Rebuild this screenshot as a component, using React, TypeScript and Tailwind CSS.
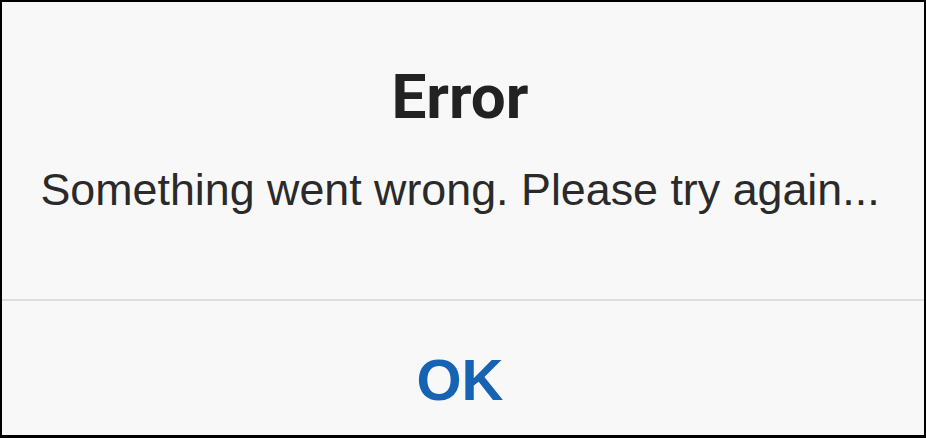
import React from 'react';

const ErrorDialog: React.FC = () => {
  return (
    <div className="w-[926px] h-[438px] bg-[#f8f8f8] border-black border-t-2 border-l-2 border-r-2 border-b-[3px] flex flex-col">
      <div className="h-[297px] flex flex-col items-center pt-[64px] pr-[6px]">
        <h1
          className="text-[62px] leading-none font-bold text-[#222222]"
          style={{ fontFamily: 'Roboto, "Liberation Sans", sans-serif' }}
        >
          Error
        </h1>
        <p
          className="mt-[39px] text-[44.8px] leading-none text-[#2a2a2a]"
          style={{ fontFamily: '"Liberation Sans", Arial, sans-serif' }}
        >
          Something went wrong. Please try again...
        </p>
      </div>
      <div className="h-[2px] bg-[#dedede]" />
      <div className="flex-1 flex justify-center items-start pt-[50px] pr-[6px]">
        <button
          className="text-[58px] leading-none font-bold text-[#1662b3]"
          style={{ fontFamily: '"Liberation Sans", Arial, sans-serif' }}
        >
          OK
        </button>
      </div>
    </div>
  );
};

export default function App() {
  return <ErrorDialog />;
}
